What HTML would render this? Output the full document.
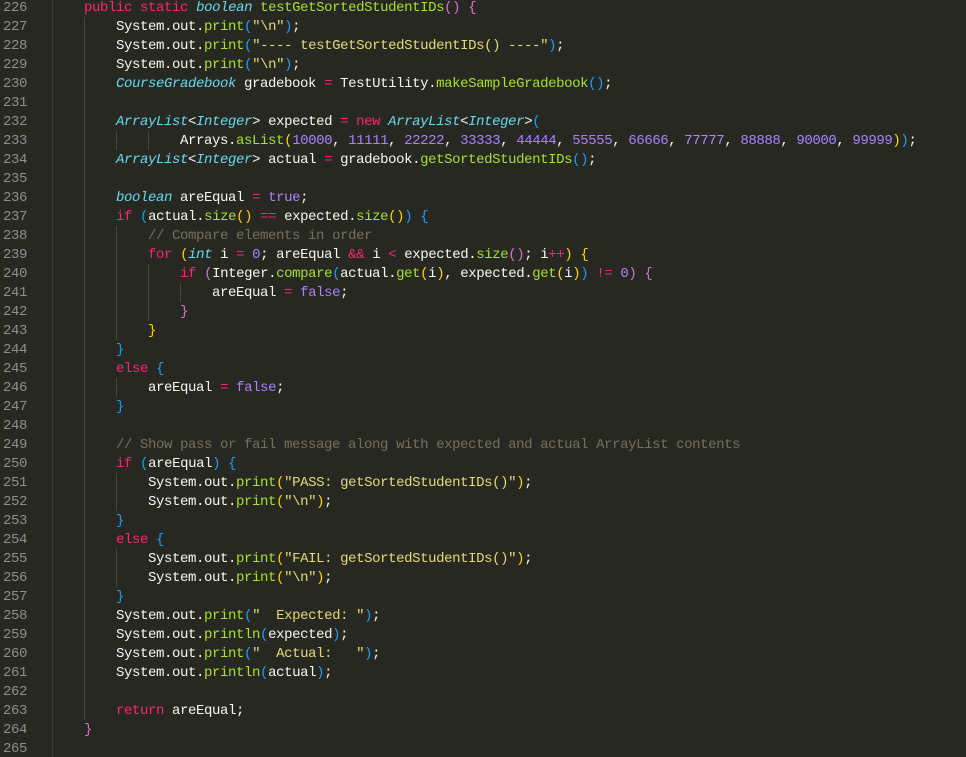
<!DOCTYPE html>
<html><head><meta charset="utf-8"><style>
html,body{margin:0;padding:0;background:#272822;width:966px;height:757px;overflow:hidden}
body{position:relative;font-family:"Liberation Mono","DejaVu Sans Mono",monospace;font-size:14px;letter-spacing:-0.4px;color:#f8f8f2}
.n{position:absolute;left:3px;color:#8f908a;line-height:19px;white-space:pre}
.c{position:absolute;left:52px;line-height:19px;white-space:pre}
.sep{position:absolute;left:52px;top:0;width:1px;height:757px;background:#3b3c36}
.g{position:absolute;width:1px;background:#46473f}
.k{color:#f92672}.t{color:#66d9ef;font-style:italic}.f{color:#a6e22e}.s{color:#e6db74}.m{color:#ae81ff}.cm{color:#75715e}
.y{color:#ffd700}.p{color:#da70d6}.b{color:#179fff}
</style></head><body>
<div class="sep"></div>
<div class="g" style="left:84px;top:17px;height:703px"></div>
<div class="g" style="left:116px;top:131px;height:19px"></div>
<div class="g" style="left:148px;top:131px;height:19px"></div>
<div class="g" style="left:116px;top:226px;height:114px"></div>
<div class="g" style="left:148px;top:264px;height:57px"></div>
<div class="g" style="left:180px;top:283px;height:19px"></div>
<div class="g" style="left:116px;top:378px;height:19px"></div>
<div class="g" style="left:116px;top:473px;height:38px"></div>
<div class="g" style="left:116px;top:549px;height:38px"></div>

<div class="n" style="top:-1.5px">226
227
228
229
230
231
232
233
234
235
236
237
238
239
240
241
242
243
244
245
246
247
248
249
250
251
252
253
254
255
256
257
258
259
260
261
262
263
264
265</div>
<div class="c" style="top:-1.5px">    <span class="k">public</span> <span class="k">static</span> <span class="t">boolean</span> <span class="f">testGetSortedStudentIDs</span><span class="p">()</span> <span class="p">{</span>
        System.out.<span class="f">print</span><span class="b">(</span><span class="s">"\n"</span><span class="b">)</span>;
        System.out.<span class="f">print</span><span class="b">(</span><span class="s">"---- testGetSortedStudentIDs() ----"</span><span class="b">)</span>;
        System.out.<span class="f">print</span><span class="b">(</span><span class="s">"\n"</span><span class="b">)</span>;
        <span class="t">CourseGradebook</span> gradebook <span class="k">=</span> TestUtility.<span class="f">makeSampleGradebook</span><span class="b">()</span>;

        <span class="t">ArrayList</span>&lt;<span class="t">Integer</span>&gt; expected <span class="k">=</span> <span class="k">new</span> <span class="t">ArrayList</span>&lt;<span class="t">Integer</span>&gt;<span class="b">(</span>
                Arrays.<span class="f">asList</span><span class="y">(</span><span class="m">10000</span>, <span class="m">11111</span>, <span class="m">22222</span>, <span class="m">33333</span>, <span class="m">44444</span>, <span class="m">55555</span>, <span class="m">66666</span>, <span class="m">77777</span>, <span class="m">88888</span>, <span class="m">90000</span>, <span class="m">99999</span><span class="y">)</span><span class="b">)</span>;
        <span class="t">ArrayList</span>&lt;<span class="t">Integer</span>&gt; actual <span class="k">=</span> gradebook.<span class="f">getSortedStudentIDs</span><span class="b">()</span>;

        <span class="t">boolean</span> areEqual <span class="k">=</span> <span class="m">true</span>;
        <span class="k">if</span> <span class="b">(</span>actual.<span class="f">size</span><span class="y">()</span> <span class="k">==</span> expected.<span class="f">size</span><span class="y">()</span><span class="b">)</span> <span class="b">{</span>
            <span class="cm">// Compare elements in order</span>
            <span class="k">for</span> <span class="y">(</span><span class="t">int</span> i <span class="k">=</span> <span class="m">0</span>; areEqual <span class="k">&amp;&amp;</span> i <span class="k">&lt;</span> expected.<span class="f">size</span><span class="p">()</span>; i<span class="k">++</span><span class="y">)</span> <span class="y">{</span>
                <span class="k">if</span> <span class="p">(</span>Integer.<span class="f">compare</span><span class="b">(</span>actual.<span class="f">get</span><span class="y">(</span>i<span class="y">)</span>, expected.<span class="f">get</span><span class="y">(</span>i<span class="y">)</span><span class="b">)</span> <span class="k">!=</span> <span class="m">0</span><span class="p">)</span> <span class="p">{</span>
                    areEqual <span class="k">=</span> <span class="m">false</span>;
                <span class="p">}</span>
            <span class="y">}</span>
        <span class="b">}</span>
        <span class="k">else</span> <span class="b">{</span>
            areEqual <span class="k">=</span> <span class="m">false</span>;
        <span class="b">}</span>

        <span class="cm">// Show pass or fail message along with expected and actual ArrayList contents</span>
        <span class="k">if</span> <span class="b">(</span>areEqual<span class="b">)</span> <span class="b">{</span>
            System.out.<span class="f">print</span><span class="y">(</span><span class="s">"PASS: getSortedStudentIDs()"</span><span class="y">)</span>;
            System.out.<span class="f">print</span><span class="y">(</span><span class="s">"\n"</span><span class="y">)</span>;
        <span class="b">}</span>
        <span class="k">else</span> <span class="b">{</span>
            System.out.<span class="f">print</span><span class="y">(</span><span class="s">"FAIL: getSortedStudentIDs()"</span><span class="y">)</span>;
            System.out.<span class="f">print</span><span class="y">(</span><span class="s">"\n"</span><span class="y">)</span>;
        <span class="b">}</span>
        System.out.<span class="f">print</span><span class="b">(</span><span class="s">"  Expected: "</span><span class="b">)</span>;
        System.out.<span class="f">println</span><span class="b">(</span>expected<span class="b">)</span>;
        System.out.<span class="f">print</span><span class="b">(</span><span class="s">"  Actual:   "</span><span class="b">)</span>;
        System.out.<span class="f">println</span><span class="b">(</span>actual<span class="b">)</span>;

        <span class="k">return</span> areEqual;
    <span class="p">}</span>
</div>
</body></html>
